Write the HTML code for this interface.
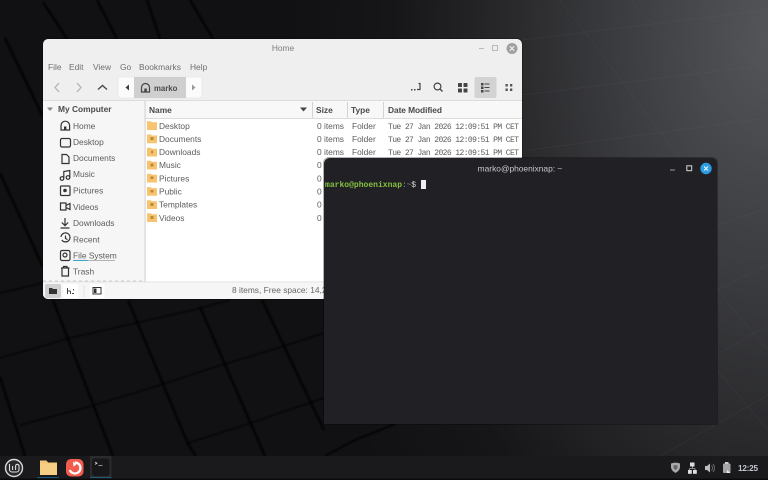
<!DOCTYPE html>
<html><head><meta charset="utf-8"><style>
html,body{margin:0;padding:0;background:#0c0c0e;width:768px;height:480px;overflow:hidden}
svg{display:block;filter:blur(.35px)}
text{font-family:"Liberation Sans",sans-serif;font-size:8.4px;fill:#5c5c5c}
.b{font-weight:bold;fill:#4a4a4a}
.m{font-family:"Liberation Mono",monospace;font-size:8px}
</style></head><body>
<svg width="768" height="480" viewBox="0 0 768 480" xmlns="http://www.w3.org/2000/svg">
<defs>
<radialGradient id="bg" gradientUnits="userSpaceOnUse" cx="0" cy="0" r="1" gradientTransform="translate(768 40) scale(480 750)">
<stop offset="0" stop-color="#545559"/><stop offset=".3" stop-color="#3c3d40"/><stop offset=".55" stop-color="#28282b"/><stop offset=".78" stop-color="#161618"/><stop offset="1" stop-color="#111113"/>
</radialGradient>
<filter id="soft"><feGaussianBlur stdDeviation=".7"/></filter>
<clipPath id="fm"><rect x="43" y="39" width="479" height="260" rx="5"/></clipPath>
<g id="f"><path d="M0 .8h3.800l1 1H10V9.500H0z" fill="#f8c36e"/></g>
</defs>
<rect width="768" height="480" fill="#111113"/>
<rect width="768" height="480" fill="url(#bg)"/>
<g stroke="#040405" fill="none" stroke-width="2.600" filter="url(#soft)" opacity=".75">
<path d="M5 38L43 117M0 173L43 267M43 2L67 39M97 0L117 39M147 0L160 39M190 0L213 39M53 300L113 456M128 300L188 444L196 456M200 307L258 440L265 456M262 300L324 430M0 377L25 456"/>
</g>
<g stroke="#060607" fill="none" stroke-width="1.200" filter="url(#soft)" opacity=".8">
<path d="M0 293L43 283M0 358L70 338L193 310L230 300M20 425L88 407L157 386L218 366L278 348L324 333M188 443L245 425L303 405L324 398"/>
<path d="M395 424L355 440L325 456" stroke="#050506" stroke-width="1.800"/>
</g>
<g stroke="#6a6b70" fill="none" stroke-width=".5" opacity=".22">
<path d="M522 40L768 10M522 95L768 65M530 150L768 118M717 225L768 208M717 290L768 265M717 355L768 325M660 456L768 395"/>
<path d="M560 0L680 158M630 0L768 150M700 0L768 80M717 290L768 350M717 370L768 430"/>
</g>

<!-- File manager -->
<rect x="42.500" y="38.500" width="480" height="261" rx="5" fill="#000" opacity=".5"/>
<g clip-path="url(#fm)">
<rect x="43" y="39" width="479" height="260" fill="#efefef"/>
<rect x="43" y="100" width="479" height="1" fill="#dcdcdc"/>
<rect x="43" y="101" width="102" height="181" fill="#f6f6f6"/>
<rect x="145" y="101" width="377" height="181" fill="#fff"/>
<rect x="145" y="101" width="377" height="17.500" fill="#f8f8f8"/>
<rect x="145" y="118" width="377" height="1" fill="#dcdcdc"/>
<rect x="144.500" y="101" width="1.200" height="181" fill="#d6d6d6"/>
<rect x="312" y="102" width="1" height="16" fill="#d4d4d4"/>
<rect x="347" y="102" width="1" height="16" fill="#d4d4d4"/>
<rect x="383" y="102" width="1" height="16" fill="#d4d4d4"/>
<rect x="43" y="282" width="479" height="17" fill="#f6f6f6"/>
<rect x="43" y="281.500" width="479" height=".8" fill="#dedede"/>
<path d="M43 281h102" stroke="#cfcfcf" stroke-dasharray="3 3" stroke-width="1"/>
</g>
<text x="283" y="51" text-anchor="middle" style="fill:#7d7d7d">Home</text>
<text x="48" y="70" style="fill:#6e6e6e">File</text><text x="69" y="70" style="fill:#6e6e6e">Edit</text><text x="93" y="70" style="fill:#6e6e6e">View</text><text x="120" y="70" style="fill:#6e6e6e">Go</text><text x="139" y="70" style="fill:#6e6e6e">Bookmarks</text><text x="190" y="70" style="fill:#6e6e6e">Help</text>
<path d="M479 48.500h5" stroke="#b8b8b8"/><rect x="492.500" y="45.500" width="5" height="5" fill="none" stroke="#b8b8b8"/>
<circle cx="512" cy="48.500" r="5.500" fill="#a0a0a0"/><path d="M509.800 46.300l4.400 4.400m0-4.400l-4.400 4.400" stroke="#eee" stroke-width="1.200"/>

<!-- toolbar -->
<g fill="none" stroke-width="1.200">
<path d="M59 83l-4 4.500 4 4.500M77 83l4 4.500-4 4.500" stroke="#b0b0b0"/>
<path d="M98 89.500l4.500-4 4.500 4" stroke="#4e4e4e" stroke-width="1.500"/>
</g>
<rect x="118" y="77" width="84" height="21" rx="2.500" fill="#fbfbfb" stroke="#e2e2e2" stroke-width=".6"/>
<rect x="134" y="77" width="52" height="21" fill="#cfcfcf"/>
<path d="M129 84.500v6l-3.500-3z" fill="#3e3e3e"/><path d="M192 84.500v6l3.500-3z" fill="#999"/>
<path d="M141.500 92v-4.500a4 4 0 0 1 8 0V92z" fill="none" stroke="#444" stroke-width="1.200"/><rect x="144.300" y="88.500" width="2.500" height="3.500" fill="#444"/>
<text x="154" y="91" class="b" style="font-size:7.800px">marko</text>
<!-- right tools -->
<path d="M418.500 83.500h1.500v6h-3" fill="none" stroke="#444" stroke-width="1.200"/><rect x="411" y="89" width="1.500" height="1.500" fill="#444"/><rect x="414" y="89" width="1.500" height="1.500" fill="#444"/>
<circle cx="437.500" cy="86.500" r="3.400" fill="none" stroke="#444" stroke-width="1.200"/><path d="M440 89l2.500 2.500" stroke="#444" stroke-width="1.300"/>
<g fill="#444"><rect x="458" y="83" width="4" height="4" rx=".6"/><rect x="463.500" y="83" width="4" height="4" rx=".6"/><rect x="458" y="88.500" width="4" height="4" rx=".6"/><rect x="463.500" y="88.500" width="4" height="4" rx=".6"/></g>
<rect x="474.500" y="77" width="22" height="21" rx="2" fill="#d3d3d3"/>
<g fill="#444"><rect x="481" y="83" width="2.500" height="2.500"/><rect x="481" y="86.500" width="2.500" height="2.500"/><rect x="481" y="90" width="2.500" height="2.500"/><rect x="484.500" y="83.500" width="5" height="1"/><rect x="484.500" y="87" width="5" height="1"/><rect x="484.500" y="90.500" width="5" height="1"/></g>
<g fill="#555"><rect x="505.500" y="84" width="2.300" height="2.500"/><rect x="510" y="84" width="2.300" height="2.500"/><rect x="505.500" y="88.500" width="2.300" height="2.500"/><rect x="510" y="88.500" width="2.300" height="2.500"/></g>

<!-- column headers -->
<text x="149" y="113" class="b">Name</text>
<path d="M300 107.500h7l-3.500 4z" fill="#444"/>
<text x="316" y="113" class="b">Size</text><text x="351" y="113" class="b">Type</text><text x="388" y="113" class="b" textLength="54">Date Modified</text>

<!-- folder rows -->
<use href="#f" x="147" y="120.500"/><use href="#f" x="147" y="133.700"/><use href="#f" x="147" y="147"/><use href="#f" x="147" y="160"/><use href="#f" x="147" y="173"/><use href="#f" x="147" y="186.300"/><use href="#f" x="147" y="199.500"/><use href="#f" x="147" y="212.500"/>
<g fill="#b98a3e"><rect x="150.500" y="137" width="3" height="3"/><rect x="151.200" y="150.500" width="1.800" height="3"/><rect x="150.500" y="163.500" width="3" height="3"/><rect x="150.500" y="176.500" width="3" height="2.500"/><rect x="150.500" y="190" width="3" height="2.500"/><rect x="150.500" y="203" width="3" height="3"/><rect x="150.500" y="216" width="3" height="3"/></g>
<text x="159" y="129">Desktop</text><text x="159" y="142">Documents</text><text x="159" y="155">Downloads</text><text x="159" y="168">Music</text><text x="159" y="181.300">Pictures</text><text x="159" y="194.500">Public</text><text x="159" y="207.700">Templates</text><text x="159" y="221">Videos</text>
<text x="317" y="129">0 items</text><text x="352" y="129">Folder</text><text x="388" y="129" class="m" style="fill:#5c5c5c" textLength="131">Tue 27 Jan 2026 12:09:51 PM CET</text>
<text x="317" y="142">0 items</text><text x="352" y="142">Folder</text><text x="388" y="142" class="m" style="fill:#5c5c5c" textLength="131">Tue 27 Jan 2026 12:09:51 PM CET</text>
<text x="317" y="155">0 items</text><text x="352" y="155">Folder</text><text x="388" y="155" class="m" style="fill:#5c5c5c" textLength="131">Tue 27 Jan 2026 12:09:51 PM CET</text>
<text x="317" y="168">0 items</text><text x="317" y="181.300">0 items</text><text x="317" y="194.500">0 items</text><text x="317" y="207.700">0 items</text><text x="317" y="221">0 items</text>

<!-- sidebar -->
<path d="M47 107.500h6l-3 3.500z" fill="#888"/>
<text x="58" y="112" class="b">My Computer</text>
<text x="73" y="129">Home</text><text x="73" y="145">Desktop</text><text x="73" y="161">Documents</text><text x="73" y="177">Music</text><text x="73" y="193.500">Pictures</text><text x="73" y="210">Videos</text><text x="73" y="226">Downloads</text><text x="73" y="242.500">Recent</text><text x="73" y="258.500">File System</text><text x="73" y="274.500">Trash</text>
<g fill="none" stroke="#333" stroke-width="1.200">
<path d="M61 130v-4.500a4.300 4.300 0 0 1 8.600 0V130z"/><rect x="64" y="126.500" width="2.400" height="3.500" fill="#333" stroke="none"/>
<rect x="60.500" y="138.500" width="10" height="8.500" rx="1.500"/>
<path d="M62 154.500h4.500l2.500 2.500V163.500H62z"/>
<circle cx="62" cy="178.500" r="1.800"/><circle cx="68" cy="177.500" r="1.800"/><path d="M63.800 178V171.500l6-1v7"/>
<rect x="60.500" y="186" width="9.500" height="9.500" rx="1"/><circle cx="65" cy="190.500" r="1.800" fill="#333" stroke="none"/>
<path d="M60.500 203h5.500v7h-5.500zM66 205.500l4-2v6l-4-2"/>
<path d="M65 218v7M61.800 222.500l3.200 3.200 3.200-3.200M60.500 228h9"/>
<path d="M61 237a4.500 4.500 0 1 1 .8 3M65.500 235.500v3l2 1"/>
<rect x="60.500" y="250.500" width="9.500" height="10" rx="1.500"/><circle cx="65" cy="255" r="2"/>
<path d="M61 268h8.500M62 268v8h6.500v-8M63.500 268v-1.500h3.500v1.500"/>
</g>
<rect x="73" y="260" width="15" height=".9" fill="#3a94cc"/><rect x="88" y="260" width="27" height=".9" fill="#aaa"/>

<!-- status bar -->
<rect x="45" y="284" width="16" height="14" rx="2" fill="#d0d0d0"/>
<rect x="63" y="284" width="15" height="14" rx="2" fill="#fff"/>
<rect x="90" y="284" width="14.500" height="14" rx="2" fill="#fff"/>
<rect x="83.500" y="285" width=".8" height="12" fill="#ddd"/>
<path d="M49 288h3l1 1h4v5h-8z" fill="#333"/>
<path d="M67.500 288v6m0-3h3m0 0v3m3-5v1.500M72 293.500h2" stroke="#444" fill="none"/>
<rect x="93" y="287.500" width="8" height="6.500" fill="none" stroke="#333"/><rect x="94" y="288.500" width="2.500" height="4.500" fill="#333"/>
<text x="232" y="293" style="fill:#666">8 items, Free space: 14,2 GB</text>

<!-- Terminal -->
<path d="M323 425V163a6 6 0 0 1 6-6H712a6 6 0 0 1 6 6V425z" fill="#000" opacity=".3"/>
<path d="M324 424V164a6 6 0 0 1 6-6H711a6 6 0 0 1 6 6V424z" fill="#212125"/>
<text x="520" y="171.500" text-anchor="middle" style="fill:#c8c8c8;font-size:8.400px">marko@phoenixnap: ~</text>
<path d="M670 170h5" stroke="#888" stroke-width="1.200"/>
<rect x="686.800" y="165.800" width="4.800" height="4.800" fill="none" stroke="#bbb" stroke-width="1.200"/>
<circle cx="706" cy="168.500" r="5.700" fill="#2a9de2"/><path d="M704 166.500l4 4m0-4l-4 4" stroke="#e8f4fc" stroke-width="1.200"/>
<text x="325" y="187" class="m" textLength="77" style="fill:#86c23e;font-weight:bold">marko@phoenixnap</text>
<text x="402" y="187" class="m" textLength="14" style="fill:#8a8f95">:~<tspan style="fill:#ddd">$</tspan></text>
<rect x="421" y="180" width="5" height="9" fill="#eee"/>

<!-- Taskbar -->
<rect x="0" y="456" width="768" height="22.500" fill="#1a1a1d"/>
<rect x="0" y="478.500" width="768" height="1.500" fill="#0a0a0b"/>
<circle cx="14" cy="468" r="8.500" fill="#2a2a2c" stroke="#d8d8d8" stroke-width="1.400"/>
<path d="M9.500 464v5.500a2.500 2.500 0 0 0 2.500 2.500h4.500a2.500 2.500 0 0 0 2.500-2.500V466a1.700 1.700 0 0 0-3.400 0v4M12.600 466v4" fill="none" stroke="#ddd" stroke-width="1.100"/>
<path d="M40 460.500h6.500l1.500 2H57v12.500H40z" fill="#f3c877"/><rect x="40" y="463.500" width="17" height="11.500" fill="#f6cf85"/>
<rect x="37" y="477.300" width="22" height=".8" fill="#1e6c93"/>
<rect x="66" y="459" width="17.500" height="17.500" rx="5" fill="#f25c4e"/>
<path d="M74.800 462.500a5.500 5.500 0 1 1-5 7.500" fill="none" stroke="#fff" stroke-width="2.300"/><path d="M73 461.500l3.500 3-3 2z" fill="#fff"/>
<rect x="90" y="456" width="21.500" height="22" fill="#2a2b2e"/>
<rect x="92" y="458.500" width="17.500" height="17.500" rx="3" fill="#17171a"/>
<path d="M95 462l2 1.200-2 1.200" stroke="#ddd" fill="none" stroke-width=".8"/><rect x="98.500" y="465" width="4" height=".8" fill="#aaa"/>
<rect x="90" y="477.300" width="21.500" height=".8" fill="#1e6c93"/>
<!-- tray -->
<path d="M671 463.500q4.500-1.800 9 0v3.500q0 3.500-4.500 6-4.500-2.500-4.500-6z" fill="#a8a8a8"/><path d="M673.500 465.500q2-.8 4 0v1.500q0 1.800-2 3-2-1.200-2-3z" fill="#666"/>
<g fill="#ddd"><rect x="690" y="462.500" width="4.500" height="4"/><rect x="688" y="470" width="3.800" height="3.800"/><rect x="693" y="470" width="3.800" height="3.800"/><path d="M692 466.500h.6v2h-3v1.500M692.500 468.500h2.500v1.500" stroke="#ddd" stroke-width=".6" fill="none"/></g>
<path d="M705 466h2l3-2.500v9l-3-2.500h-2z" fill="#bcbcbc"/><path d="M711.500 465.500a3.500 3.500 0 0 1 0 5M713 464a6 6 0 0 1 0 8" stroke="#666" fill="none"/>
<rect x="723" y="463.500" width="7.500" height="9.500" rx="1" fill="#a4a4a4"/><rect x="725" y="462" width="3.500" height="2" fill="#ccc"/><path d="M727 470l3.500 3h-3.500z" fill="#eee"/>
<text x="738" y="471" textLength="20" style="fill:#c3c8cf;font-weight:bold;font-size:8.200px">12:25</text>
</svg>
</body></html>
